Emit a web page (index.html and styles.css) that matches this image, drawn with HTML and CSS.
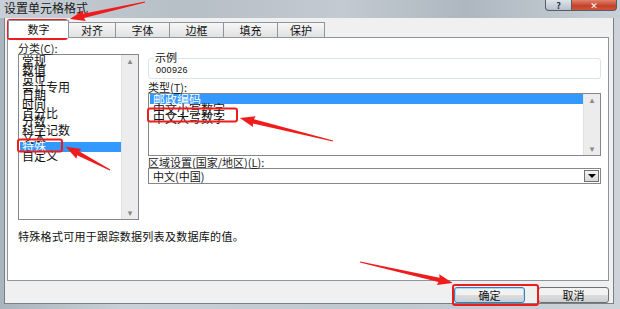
FILE: index.html
```html
<!DOCTYPE html>
<html lang="zh-CN">
<head>
    <meta charset="UTF-8">
    <title>设置单元格格式</title>
    <link rel="stylesheet" href="styles.css">
</head>
<body>
    <div class="window">
        <div class="titlebar">
            <span class="title">设置单元格格式</span>
            <div class="caption-btns">
                <span class="help">?</span>
                <span class="close">✕</span>
            </div>
        </div>
        <div class="client">
            <div class="tabs">
                <div class="tab active">数字</div>
                <div class="tab w47">对齐</div>
                <div class="tab">字体</div>
                <div class="tab">边框</div>
                <div class="tab">填充</div>
                <div class="tab w47">保护</div>
            </div>
            <div class="panel">
                <div class="cols">
                    <div class="left">
                        <div class="label">分类(<u>C</u>):</div>
                        <div class="listbox cat">
                            <ul class="items">
                                <li>常规</li>
                                <li>数值</li>
                                <li>货币</li>
                                <li>会计专用</li>
                                <li>日期</li>
                                <li>时间</li>
                                <li>百分比</li>
                                <li>分数</li>
                                <li>科学记数</li>
                                <li>文本</li>
                                <li class="sel">特殊</li>
                                <li>自定义</li>
                            </ul>
                            <div class="scrollbar"><span>▴</span><span>▾</span></div>
                        </div>
                    </div>
                    <div class="right">
                        <div class="sample">
                            <span class="legend">示例</span>
                            <div class="sample-val">000926</div>
                        </div>
                        <div class="label">类型(<u>T</u>):</div>
                        <div class="listbox type">
                            <ul class="items">
                                <li class="sel">邮政编码</li>
                                <li>中文小写数字</li>
                                <li>中文大写数字</li>
                            </ul>
                            <div class="scrollbar"><span>▴</span><span>▾</span></div>
                        </div>
                        <div class="label">区域设置(国家/地区)(<u>L</u>):</div>
                        <div class="select">
                            <span>中文(中国)</span>
                            <span class="drop"></span>
                        </div>
                    </div>
                </div>
                <p class="desc">特殊格式可用于跟踪数据列表及数据库的值。</p>
            </div>
            <div class="buttons">
                <button class="btn default">确定</button>
                <button class="btn">取消</button>
            </div>
        </div>

        <!-- annotation overlay -->
        <svg class="marks" viewBox="0 0 620 309" width="620" height="309">
            <g fill="none" stroke="#ee1c1c" stroke-width="2">
                <rect x="8" y="20" width="59" height="19" rx="2"/>
                <rect x="18" y="139.5" width="44" height="12" rx="2"/>
                <rect x="148" y="108.5" width="89" height="13" rx="2"/>
                <rect x="453" y="285" width="85" height="20" rx="2"/>
            </g>
            <g fill="#ee1c1c">
                <polygon transform="translate(145 2) rotate(167.2)" points="0,-0.6 63,-2.2 62,-5.5 77,0 62,5.5 63,2.2 0,0.6"/>
                <polygon transform="translate(110 170) rotate(-152.4)" points="0,-0.6 36,-2.2 35,-5.5 50,0 35,5.5 36,2.2 0,0.6"/>
                <polygon transform="translate(333 141) rotate(-166.1)" points="0,-0.6 82,-2.2 81,-5.5 96,0 81,5.5 82,2.2 0,0.6"/>
                <polygon transform="translate(360 262) rotate(12.7)" points="0,-0.6 81,-2.2 80,-5.5 95,0 80,5.5 81,2.2 0,0.6"/>
            </g>
        </svg>
    </div>
</body>
</html>
```

FILE: styles.css
```css
body {
    margin: 0;
    font-family: "Noto Sans CJK SC", "DejaVu Sans", sans-serif;
    font-size: 11px;
    color: #111;
}
.window {
    position: relative;
    width: 620px;
    height: 309px;
    background: linear-gradient(90deg, #aab4bd, #c9d0d7 20%, #bfc7cf 60%, #cdd3d9);
    overflow: hidden;
}
.titlebar {
    height: 18px;
    display: flex;
    justify-content: space-between;
    background: linear-gradient(90deg, #c8cfd6 0%, #b6bec6 30%, #c3cad1 55%, #aeb7c0 75%, #c9d0d7 100%);
}
.title {
    padding-left: 4px;
    font-size: 12px;
    line-height: 16px;
    color: #1a1a1a;
}
.caption-btns {
    display: flex;
    height: 11px;
    margin-right: 3px;
}
.caption-btns span {
    display: flex;
    align-items: center;
    justify-content: center;
    color: #fff;
    border: 1px solid #555c66;
    border-top: none;
    font-size: 9px;
    font-weight: bold;
    line-height: 1;
}
.help {
    width: 25px;
    background: linear-gradient(#dfe4ea, #b7c0ca);
    border-radius: 0 0 0 4px;
    color: #2a3340 !important;
}
.close {
    width: 44px;
    background: linear-gradient(#e0826e, #c4402a 60%, #d0553a);
    border-left: none !important;
    border-radius: 0 0 4px 0;
}
.client {
    margin: 0 6px 0 4px;
    height: 286px;
    background: #f0f0f0;
    border: 1px solid #7a8088;
    border-top: none;
    padding: 2px 2px 0 2px;
    box-sizing: border-box;
}
.tabs {
    display: flex;
    height: 17px;
    align-items: flex-end;
    padding-left: 1px;
}
.tab {
    width: 55px;
    height: 15px;
    margin-right: -1px;
    border: 1px solid #8d959e;
    border-bottom: none;
    background: linear-gradient(#f7f7f7, #e1e1e1);
    text-align: center;
    font-size: 11px;
    line-height: 15px;
    box-sizing: border-box;
}
.tab.w47 { width: 48px; }
.tab.active {
    width: 61px;
    height: 18px;
    background: #fff;
    position: relative;
    z-index: 1;
    line-height: 17px;
    margin-bottom: -1px;
}
.panel {
    height: 244px;
    margin-right: 2px;
    background: #fff;
    border: 1px solid #8d959e;
    padding: 4px 7px 0 10px;
    box-sizing: border-box;
}
.cols {
    display: flex;
    gap: 9px;
}
.left { width: 121px; }
.right { flex: 1; }
.label {
    font-size: 11px;
    line-height: 12px;
    height: 12px;
    color: #222;
}
.listbox {
    display: flex;
    border: 1px solid #828790;
    background: #fff;
    box-sizing: border-box;
    overflow: hidden;
}
.listbox.cat { height: 166px; }
.listbox.type { height: 63px; }
.items {
    flex: 1;
    margin: 0;
    padding: 2px 0 0 1px;
    list-style: none;
    font-size: 12px;
}
.cat .items li {
    height: 8.6px;
    line-height: 8.6px;
    padding-left: 2px;
}
.type .items { padding-top: 0; }
.type .items li {
    height: 9.5px;
    line-height: 9.5px;
    padding-left: 3px;
}
.items li.sel {
    background: #3399ff;
    color: #fff;
}
.cat .items li.sel { height: 10px; margin-top: -1px; }
.scrollbar {
    width: 16px;
    background: #ececec;
    border-left: 1px solid #e2e2e2;
    display: flex;
    flex-direction: column;
    justify-content: space-between;
    align-items: center;
    color: #888;
    font-size: 9px;
    line-height: 10px;
    padding: 1px 0;
}
.sample {
    position: relative;
    margin-top: 16px;
    height: 19px;
    border: 1px solid #dde3ea;
    border-radius: 3px;
    margin-bottom: 2px;
}
.legend {
    position: absolute;
    left: 5px;
    top: -7px;
    background: #fff;
    padding: 0 1px;
    font-size: 11px;
    line-height: 11px;
}
.sample-val {
    padding: 6px 0 0 7px;
    font-family: "Liberation Sans", sans-serif;
    font-size: 9px;
    line-height: 10px;
    letter-spacing: 0.3px;
}
.select {
    display: flex;
    justify-content: space-between;
    align-items: center;
    height: 16px;
    border: 1px solid #828790;
    box-sizing: border-box;
    padding-left: 4px;
    font-size: 11px;
}
.drop {
    width: 15px;
    height: 12px;
    margin-right: 1px;
    border: 1px solid #707070;
    box-sizing: border-box;
    background: linear-gradient(#f4f4f4, #d8d8d8);
    position: relative;
}
.drop::after {
    content: "";
    position: absolute;
    left: 3px;
    top: 3px;
    border-left: 4px solid transparent;
    border-right: 4px solid transparent;
    border-top: 4px solid #000;
}
.desc {
    margin: 9px 0 0 0;
    font-size: 11px;
    letter-spacing: 0.3px;
    line-height: 14px;
}
.buttons {
    display: flex;
    justify-content: flex-end;
    gap: 13px;
    padding: 6px 2px 0 0;
}
.btn {
    width: 71px;
    height: 16px;
    padding: 0;
    font-family: inherit;
    font-size: 11px;
    line-height: 14px;
    color: #111;
    border: 1px solid #707070;
    border-radius: 3px;
    background: linear-gradient(#f2f2f2 50%, #dddddd 50%, #cfcfcf);
}
.btn.default {
    border-color: #3c7fb1;
    box-shadow: inset 0 0 0 1px #a8dcf4;
}
.marks {
    position: absolute;
    left: 0;
    top: 0;
    pointer-events: none;
}
```
